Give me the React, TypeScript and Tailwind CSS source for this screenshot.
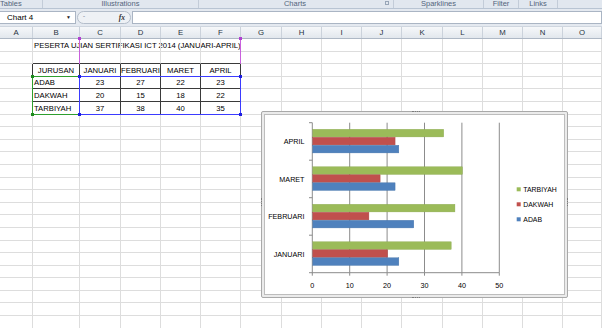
import React from "react";

const cols = ["A", "B", "C", "D", "E", "F", "G", "H", "I", "J", "K", "L", "M", "N", "O"];
const ROWS = 23;

const cells: Record<string, { t: string; a: "l" | "c" }> = {
  "1-1": { t: "PESERTA UJIAN SERTIFIKASI ICT 2014 (JANUARI-APRIL)", a: "l" },
  "3-1": { t: "JURUSAN", a: "c" },
  "3-2": { t: "JANUARI", a: "c" },
  "3-3": { t: "FEBRUARI", a: "c" },
  "3-4": { t: "MARET", a: "c" },
  "3-5": { t: "APRIL", a: "c" },
  "4-1": { t: "ADAB", a: "l" },
  "4-2": { t: "23", a: "c" },
  "4-3": { t: "27", a: "c" },
  "4-4": { t: "22", a: "c" },
  "4-5": { t: "23", a: "c" },
  "5-1": { t: "DAKWAH", a: "l" },
  "5-2": { t: "20", a: "c" },
  "5-3": { t: "15", a: "c" },
  "5-4": { t: "18", a: "c" },
  "5-5": { t: "22", a: "c" },
  "6-1": { t: "TARBIYAH", a: "l" },
  "6-2": { t: "37", a: "c" },
  "6-3": { t: "38", a: "c" },
  "6-4": { t: "40", a: "c" },
  "6-5": { t: "35", a: "c" },
};

const cats = ["JANUARI", "FEBRUARI", "MARET", "APRIL"];
const series = [
  { name: "TARBIYAH", color: "#9bbb59", edge: "#8aa84e", vals: [37, 38, 40, 35] },
  { name: "DAKWAH", color: "#c0504d", edge: "#a94744", vals: [20, 15, 18, 22] },
  { name: "ADAB", color: "#4f81bd", edge: "#4573a9", vals: [23, 27, 22, 23] },
];

const X0 = 312.3;
const UNIT = 3.74;
const YB = 272.7;
const BAND = 37.5;

function Chart() {
  return (
    <svg width={299} height={179} viewBox="265 115 299 179" className="block">
      {[1, 2, 3, 4, 5].map((k) => (
        <line key={k} x1={X0 + k * 37.4} x2={X0 + k * 37.4} y1={122.7} y2={YB} stroke="#8c8c8c" strokeWidth={1} />
      ))}
      <line x1={X0} x2={X0} y1={122.7} y2={YB + 0.5} stroke="#8c8c8c" strokeWidth={1} />
      <line x1={X0} x2={X0 + 187} y1={YB} y2={YB} stroke="#8c8c8c" strokeWidth={1} />
      {[0, 1, 2, 3, 4].map((i) => (
        <line key={i} x1={309} x2={X0} y1={YB - i * BAND} y2={YB - i * BAND} stroke="#8c8c8c" strokeWidth={1} />
      ))}
      {[0, 1, 2, 3, 4, 5].map((k) => (
        <line key={k} x1={X0 + k * 37.4} x2={X0 + k * 37.4} y1={YB} y2={YB + 3} stroke="#8c8c8c" strokeWidth={1} />
      ))}
      {cats.map((c, ci) => {
        const top = YB - BAND * (ci + 1);
        return (
          <g key={c}>
            {series.map((s, si) => (
              <rect
                key={s.name}
                x={X0 + 0.5}
                y={top + 6.6 + si * 8}
                width={s.vals[ci] * UNIT}
                height={7.6}
                fill={s.color}
                stroke={s.edge}
                strokeWidth={0.4}
              />
            ))}
            <text
              x={304.5}
              y={top + BAND / 2 + 0.5}
              textAnchor="end"
              dominantBaseline="central"
              fontSize={7.2}
              fill="#000"
              style={{ fontFamily: "'Liberation Sans', Arial, sans-serif" }}
            >
              {c}
            </text>
          </g>
        );
      })}
      {[0, 10, 20, 30, 40, 50].map((v, k) => (
        <text
          key={v}
          x={X0 + k * 37.4}
          y={285.3}
          textAnchor="middle"
          dominantBaseline="central"
          fontSize={7.2}
          fill="#000"
          style={{ fontFamily: "'Liberation Sans', Arial, sans-serif" }}
        >
          {v}
        </text>
      ))}
      {series.map((s, i) => (
        <g key={s.name}>
          <rect x={516.7} y={187.3 + i * 15} width={4} height={4} fill={s.color} />
          <text
            x={523.3}
            y={189.5 + i * 15}
            dominantBaseline="central"
            fontSize={6.9}
            fill="#000"
            style={{ fontFamily: "'Liberation Sans', Arial, sans-serif" }}
          >
            {s.name}
          </text>
        </g>
      ))}
    </svg>
  );
}

export default function App() {
  const rows = Array.from({ length: ROWS }, (_, i) => i + 1);
  return (
    <div className="relative w-[602px] h-[328px] overflow-hidden bg-white font-['Liberation_Sans',Arial,sans-serif]">
      {/* ribbon group labels */}
      <div className="flex h-[9px] bg-[#e1e7ef] border-b border-[#b8c4d3] text-[7.5px] leading-[7px] text-[#53657c]">
        <div className="w-[43px] border-r border-[#c3ccd8] pl-0">Tables</div>
        <div className="w-[156px] border-r border-[#c3ccd8] text-center">Illustrations</div>
        <div className="w-[195px] border-r border-[#c3ccd8] flex items-start">
          <span className="flex-1 text-center pl-[6px]">Charts</span>
          <span className="w-[4px] h-[4px] border border-[#98a6b8] mr-[4px] mt-[1px]" />
        </div>
        <div className="w-[90px] border-r border-[#c3ccd8] text-center">Sparklines</div>
        <div className="w-[35px] border-r border-[#c3ccd8] text-center">Filter</div>
        <div className="w-[39px] border-r border-[#c3ccd8] text-center">Links</div>
        <div className="flex-1" />
      </div>
      {/* formula bar */}
      <div className="h-[18px] bg-[#e4e9f0] pt-[2px] border-b border-[#cfd6df]">
        <div className="flex h-[13px] items-stretch">
          <div className="w-[76px] bg-white border-y border-r border-[#aab5c4] flex items-center pl-[7px] pr-[4px] text-[8px] text-[#000]">
            <span className="flex-1">Chart 4</span>
            <span className="text-[5px] text-[#222]">▼</span>
          </div>
          <div className="w-[54px] ml-[1px] rounded-full border border-[#b3bdca] bg-[#eef1f5] flex items-center justify-between px-[5px] text-[#9aa5b3]">
            <span className="text-[6px] leading-none">⁼</span>
            <span className="text-[7.5px] italic font-bold text-[#333] font-['Liberation_Serif',serif]">fx</span>
          </div>
          <div className="flex-1 ml-[1px] bg-white border border-[#aab5c4]" />
        </div>
      </div>
      {/* column headers */}
      <div className="grid grid-cols-[33px_47px_41px_40px_40px_40px_41px_40px_40px_40px_41px_40px_40px_40px_39px] h-[12px] bg-gradient-to-b from-[#f6f8fa] to-[#e2e7ed] border-b border-[#aeb8c5]">
        {cols.map((c) => (
          <div key={c} className="border-r border-[#cbd2db] text-center text-[7.8px] leading-[11px] text-[#27333f]">
            {c}
          </div>
        ))}
      </div>
      {/* grid */}
      <div className="relative">
        <div className="grid grid-cols-[33px_47px_41px_40px_40px_40px_41px_40px_40px_40px_41px_40px_40px_40px_39px] auto-rows-[12.6px] text-[7.7px] text-[#000]">
          {rows.map((r) =>
            cols.map((_, c) => {
              const darkR = r >= 3 && r <= 6 && c <= 5;
              const darkB = r >= 2 && r <= 6 && c >= 1 && c <= 5;
              const cell = cells[`${r}-${c}`];
              return (
                <div
                  key={`${r}-${c}`}
                  className={`border-r border-b whitespace-nowrap flex items-center pt-[1px] ${
                    darkR ? "border-r-[#3a3a3a]" : "border-r-[#dddddd]"
                  } ${darkB ? "border-b-[#3a3a3a]" : "border-b-[#dddddd]"} ${
                    cell && cell.a === "c" ? "justify-center" : "justify-start pl-[1px]"
                  }`}
                >
                  {cell ? cell.t : null}
                </div>
              );
            })
          )}
        </div>
        {/* chart data range highlights */}
        <div className="absolute left-[79px] top-[0px] w-[162px] h-[25px] border-x border-[#c860dc]" />
        <div className="absolute left-[78px] top-[-2px] w-[3px] h-[3px] bg-[#b040d0]" />
        <div className="absolute left-[239px] top-[-2px] w-[3px] h-[3px] bg-[#b040d0]" />
        <div className="absolute left-[32px] top-[37px] w-[48px] h-[39px] border border-[#2e9e2e]" />
        <div className="absolute left-[79px] top-[37px] w-[162px] h-[39px] border border-[#3b3bff]" />
        <div className="absolute left-[31px] top-[36px] w-[3px] h-[3px] bg-[#1d8a1d]" />
        <div className="absolute left-[31px] top-[74px] w-[3px] h-[3px] bg-[#1d8a1d]" />
        <div className="absolute left-[78px] top-[36px] w-[3px] h-[3px] bg-[#1f1fe0]" />
        <div className="absolute left-[78px] top-[74px] w-[3px] h-[3px] bg-[#1f1fe0]" />
        <div className="absolute left-[239px] top-[36px] w-[3px] h-[3px] bg-[#1f1fe0]" />
        <div className="absolute left-[239px] top-[74px] w-[3px] h-[3px] bg-[#1f1fe0]" />
      </div>
      {/* chart object */}
      <div className="absolute left-[261px] top-[111px] w-[307px] h-[187px] rounded-[2px] border border-[#a9a9a9] bg-[#ebebeb] p-[2px]">
        <div className="w-full h-full border border-[#bdbdbd] bg-white">
          <Chart />
        </div>
        <div className="absolute left-[150px] top-[-1px] w-[8px] h-[1px] border-t border-dotted border-[#7a7a7a]" />
        <div className="absolute left-[150px] bottom-[-1px] w-[8px] h-[1px] border-t border-dotted border-[#7a7a7a]" />
        <div className="absolute left-[-1px] top-[86px] w-[1px] h-[8px] border-l border-dotted border-[#7a7a7a]" />
        <div className="absolute right-[-1px] top-[86px] w-[1px] h-[8px] border-l border-dotted border-[#7a7a7a]" />
      </div>
    </div>
  );
}
